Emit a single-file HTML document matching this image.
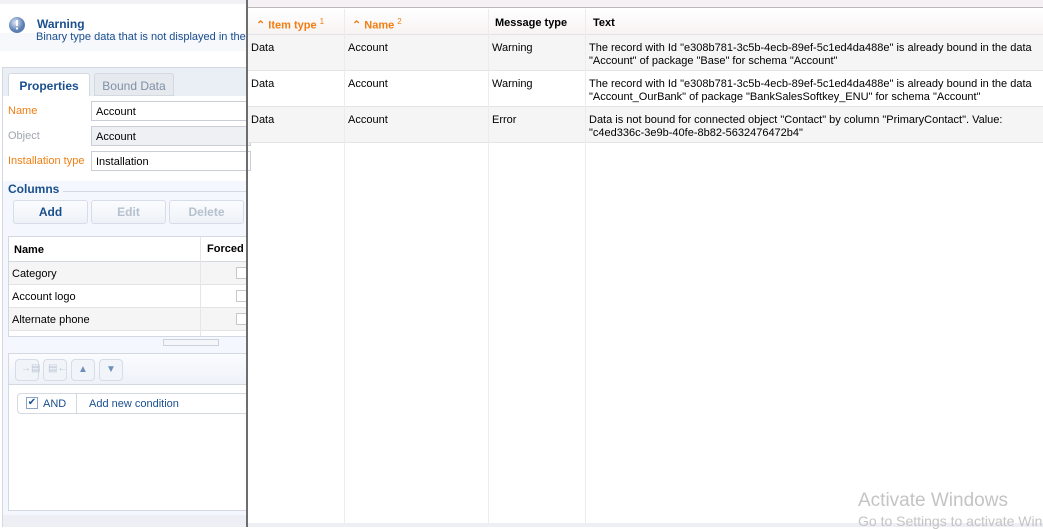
<!DOCTYPE html>
<html><head><meta charset="utf-8"><style>
*{margin:0;padding:0;box-sizing:border-box}
body{width:1043px;height:527px;overflow:hidden;position:relative;background:#fff;font-family:"Liberation Sans",Tahoma,sans-serif;font-size:11px;color:#000}
.a{position:absolute}
.b{font-weight:bold}
.btn{position:absolute;top:200px;height:24px;border:1px solid #d6dde8;border-radius:3px;background:linear-gradient(#fbfcfe,#eef2f8);text-align:center;line-height:22px;font-weight:bold;font-size:12px}
.inp{position:absolute;left:91px;width:160px;height:20px;border:1px solid #c9ced6;padding-left:4px;line-height:20px;font-size:11px}
.row{position:absolute;left:9px;width:238px;height:23px;border-bottom:1px solid #e3e3e3;line-height:24px;padding-left:3px}
.cb{position:absolute;left:227px;top:5px;width:12px;height:12px;border:1px solid #c8c8c8;background:#fff}
.ib{position:absolute;top:359px;width:24px;height:22px;border:1px solid #d6dde8;border-radius:4px;background:#f1f4f9}
.vl{position:absolute;top:9px;width:1px;height:518px;background:#ececec}
.gr{position:absolute;left:248px;width:795px;height:36px;border-bottom:1px solid #e4e4e4}
.c{position:absolute;top:7px;line-height:13px}
</style></head><body>
<div class="a" style="left:0;top:0;width:248px;height:527px;background:#fff"></div>
<div class="a" style="left:0;top:0;width:248px;height:4px;background:#f1f1f6"></div>
<div class="a" style="left:0;top:33px;width:248px;height:18px;background:#f7f8fc"></div>
<svg class="a" style="left:8px;top:16px" width="18" height="18"><defs><radialGradient id="g" cx="40%" cy="35%"><stop offset="0" stop-color="#dfe8f5"/><stop offset="1" stop-color="#5b7fb4"/></radialGradient></defs><circle cx="9" cy="9" r="8" fill="url(#g)"/><rect x="8" y="4" width="2" height="6" fill="#fff"/><rect x="8" y="11.5" width="2" height="2" fill="#fff"/></svg>
<div class="a b" style="left:37px;top:17px;color:#1a4f8e;font-size:12px">Warning</div>
<div class="a" style="left:36px;top:31px;color:#1a4f8e;white-space:nowrap">Binary type data that is not displayed in the</div>
<div class="a" style="left:2px;top:67px;width:246px;height:460px;background:#f4f7fd;border:1px solid #d4d8e0"></div>
<div class="a" style="left:3px;top:68px;width:245px;height:28px;background:#eaeef5"></div>
<div class="a b" style="left:8px;top:73px;width:82px;height:24px;background:#fff;border:1px solid #d4d8e0;border-bottom:none;border-radius:3px 3px 0 0;text-align:center;line-height:24px;color:#1a4f8e;font-size:12px">Properties</div>
<div class="a" style="left:94px;top:73px;width:80px;height:23px;background:#e6e9ee;border:1px solid #d4d8e0;border-radius:3px 3px 0 0;text-align:center;line-height:24px;color:#7f8fa6;font-size:12px">Bound Data</div>
<div class="a" style="left:3px;top:96px;width:245px;height:85px;background:#fff"></div>
<div class="a" style="left:8px;top:105px;color:#f07e12">Name</div>
<div class="a" style="left:8px;top:130px;color:#a0a6ae">Object</div>
<div class="a" style="left:8px;top:155px;color:#f07e12">Installation type</div>
<div class="inp" style="top:101px;background:#fff">Account</div>
<div class="inp" style="top:126px;background:#eef0f4">Account</div>
<div class="inp" style="top:151px;background:#fff">Installation</div>
<div class="a b" style="left:8px;top:182px;color:#1a4f8e;font-size:12px">Columns</div>
<div class="a" style="left:63px;top:191px;width:185px;height:1px;background:#d4d8e0"></div>
<div class="btn" style="left:13px;width:75px;color:#1a4f8e">Add</div>
<div class="btn" style="left:91px;width:75px;color:#b6c0ce">Edit</div>
<div class="btn" style="left:169px;width:75px;color:#b6c0ce">Delete</div>
<div class="a" style="left:8px;top:236px;width:240px;height:101px;background:#fff;border:1px solid #d4d8e0"></div>
<div class="a b" style="left:9px;top:237px;width:239px;height:25px;border-bottom:1px solid #d4d8e0;line-height:26px;padding-left:5px">Name</div>
<div class="a b" style="left:207px;top:243px">Forced</div>
<div class="row" style="top:262px;background:#f5f5f5">Category<div class="cb"></div></div>
<div class="row" style="top:285px">Account logo<div class="cb"></div></div>
<div class="row" style="top:308px;background:#f5f5f5">Alternate phone<div class="cb"></div></div>
<div class="a" style="left:200px;top:237px;width:1px;height:99px;background:#e6e6e6"></div>
<div class="a" style="left:163px;top:339px;width:56px;height:7px;border:1px solid #ccd2dc;background:#f4f6fa"></div>
<div class="a" style="left:8px;top:353px;width:240px;height:1px;background:#d4d8e0"></div>
<div class="a" style="left:8px;top:353px;width:1px;height:158px;background:#d4d8e0"></div>
<div class="a" style="left:9px;top:354px;width:239px;height:157px;background:#fff;border-bottom:1px solid #d4d8e0"></div>
<div class="a" style="left:9px;top:354px;width:239px;height:31px;background:linear-gradient(#fbfcfe,#eef2f8);border-bottom:1px solid #d4d8e0"></div>
<div class="ib" style="left:15px"><span class="a" style="left:5px;top:3px;color:#bcc6d4;font-size:10px">→▤</span></div>
<div class="ib" style="left:43px"><span class="a" style="left:4px;top:3px;color:#bcc6d4;font-size:10px">▤←</span></div>
<div class="ib" style="left:71px"><span class="a" style="left:6px;top:4px;color:#6f8fbb;font-size:10px">▲</span></div>
<div class="ib" style="left:99px"><span class="a" style="left:6px;top:4px;color:#6f8fbb;font-size:10px">▼</span></div>
<div class="a" style="left:17px;top:393px;width:231px;height:21px;border:1px solid #d4d8e0;border-right:none;border-radius:4px 0 0 4px"></div>
<div class="a" style="left:26px;top:397px;width:12px;height:12px;border:1px solid #8ea4c4;background:#fff;color:#1a4f8e;font-size:10px;line-height:10px;text-align:center">✔</div>
<div class="a" style="left:43px;top:398px;color:#1a4f8e">AND</div>
<div class="a" style="left:76px;top:394px;width:1px;height:19px;background:#d4d8e0"></div>
<div class="a" style="left:89px;top:398px;color:#1a4f8e">Add new condition</div>
<div class="a" style="left:3px;top:515px;width:245px;height:12px;background:#eeeef5"></div>
<div class="a" style="left:246px;top:0;width:2px;height:527px;background:#6d6d6d"></div>
<div class="a" style="left:248px;top:0;width:795px;height:8px;background:#f5f1f5;border-bottom:1px solid #b8b8b8"></div>
<div class="a" style="left:248px;top:9px;width:795px;height:26px;background:linear-gradient(#fff,#f7f3f3);border-bottom:1px solid #e6e2ea"></div>
<div class="vl" style="left:344px"></div><div class="vl" style="left:488px"></div><div class="vl" style="left:585px"></div>
<div class="a b" style="left:256px;top:17px;color:#f07e12">⌃ Item type <sup style="font-size:8px;font-weight:normal">1</sup></div>
<div class="a b" style="left:352px;top:17px;color:#f07e12">⌃ Name <sup style="font-size:8px;font-weight:normal">2</sup></div>
<div class="a b" style="left:495px;top:17px">Message type</div>
<div class="a b" style="left:593px;top:17px">Text</div>
<div class="gr" style="top:35px;background:#f5f5f5"></div>
<div class="gr" style="top:71px;background:#fff"></div>
<div class="gr" style="top:107px;background:#f5f5f5"></div>
<div class="vl" style="left:344px;top:35px;height:108px"></div><div class="vl" style="left:488px;top:35px;height:108px"></div><div class="vl" style="left:585px;top:35px;height:108px"></div>
<div class="a" style="left:0;top:35px;width:1043px">
<div class="c" style="left:251px">Data</div><div class="c" style="left:348px">Account</div><div class="c" style="left:492px">Warning</div>
<div class="c" style="left:589px;white-space:nowrap">The record with Id "e308b781-3c5b-4ecb-89ef-5c1ed4da488e" is already bound in the data<br>"Account" of package "Base" for schema "Account"</div></div>
<div class="a" style="left:0;top:71px;width:1043px">
<div class="c" style="left:251px">Data</div><div class="c" style="left:348px">Account</div><div class="c" style="left:492px">Warning</div>
<div class="c" style="left:589px;white-space:nowrap">The record with Id "e308b781-3c5b-4ecb-89ef-5c1ed4da488e" is already bound in the data<br>"Account_OurBank" of package "BankSalesSoftkey_ENU" for schema "Account"</div></div>
<div class="a" style="left:0;top:107px;width:1043px">
<div class="c" style="left:251px">Data</div><div class="c" style="left:348px">Account</div><div class="c" style="left:492px">Error</div>
<div class="c" style="left:589px;white-space:nowrap">Data is not bound for connected object "Contact" by column "PrimaryContact". Value:<br>"c4ed336c-3e9b-40fe-8b82-5632476472b4"</div></div>
<div class="a" style="left:248px;top:523px;width:795px;height:4px;background:#eeeef5"></div>
<div class="a" style="left:858px;top:490px;color:#c4c4c4;font-size:19px;white-space:nowrap">Activate Windows</div>
<div class="a" style="left:858px;top:513px;color:#c4c4c4;font-size:14px;white-space:nowrap">Go to Settings to activate Windows.</div>
</body></html>
